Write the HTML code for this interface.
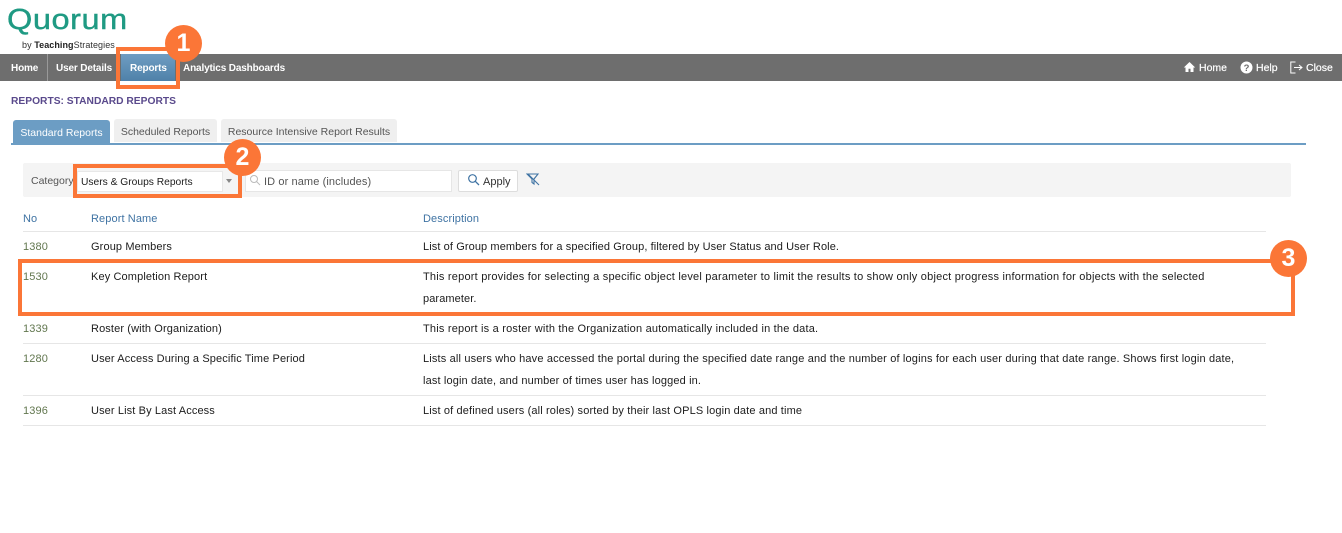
<!DOCTYPE html>
<html><head><meta charset="utf-8">
<style>
html,body{margin:0;padding:0;background:#fff;width:1342px;height:533px;overflow:hidden}
body{position:relative;font-family:"Liberation Sans",sans-serif;font-size:11px;color:#1c1c1c}
.t{position:absolute;white-space:nowrap;line-height:14px}
.b{position:absolute}
.nav{color:#fff;font-weight:bold;font-size:10px;top:62px;letter-spacing:-.15px}
.r{font-weight:normal;font-size:10.5px;letter-spacing:0;-webkit-text-stroke:.2px #fff;top:61px}
.h{color:#3f73a3;font-size:11px;top:212px;letter-spacing:.1px}
.no{color:#62774f;left:23px;font-size:11px;letter-spacing:.12px}
.nm{left:91px;letter-spacing:.12px}
.d{left:423px}
.line{position:absolute;left:23px;width:1243px;height:1px;background:#e6e6e6}
.box{position:absolute;border:4px solid #fb7637;box-sizing:border-box}
.circ{position:absolute;width:37px;height:37px;border-radius:50%;background:#fb7637;color:#fff;font-weight:bold;font-size:25px;line-height:37px;text-align:center}
.tab{position:absolute;top:119px;height:23px;background:#efefef;border-radius:3px 3px 0 0;color:#555;font-size:10.5px;line-height:27px;text-align:center}
</style></head><body>
<div class="t" style="left:7px;top:3px;font-size:29px;line-height:34px;color:#1f9a83;letter-spacing:.5px;transform:scaleX(1.12);transform-origin:0 0;-webkit-text-stroke:.4px #1f9a83">Quorum</div>
<div class="t" style="left:22px;top:39px;font-size:9px;line-height:12px;color:#333;letter-spacing:.07px">by <b style="color:#222">Teaching</b>Strategies</div>

<div class="b" style="left:0;top:54px;width:1342px;height:27px;background:#6e6e6e"></div>
<div class="b" style="left:47px;top:54px;width:1px;height:27px;background:#999"></div>
<div class="b" style="left:121px;top:54px;width:54px;height:27px;background:linear-gradient(#6f9dc2,#4f81a9)"></div>
<div class="t nav" style="left:11px">Home</div>
<div class="t nav" style="left:56px">User Details</div>
<div class="t nav" style="left:130px">Reports</div>
<div class="t nav" style="left:183px">Analytics Dashboards</div>
<svg class="b" style="left:1183px;top:61px" width="13" height="12" viewBox="0 0 13 12"><path d="M6.500 1L0.800 6.500h1.700V11h3V7.800h2V11h3V6.500h1.700z" fill="#fff"/></svg>
<div class="t nav r" style="left:1199px">Home</div>
<svg class="b" style="left:1240px;top:61px" width="13" height="13" viewBox="0 0 13 13"><circle cx="6.500" cy="6.500" r="6" fill="#fff"/><text x="6.500" y="10" font-family="Liberation Sans" font-weight="bold" font-size="9.500" text-anchor="middle" fill="#6e6e6e">?</text></svg>
<div class="t nav r" style="left:1256px">Help</div>
<svg class="b" style="left:1290px;top:61px" width="14" height="13" viewBox="0 0 14 13"><path d="M5.500 1H.800V12H5.500M4 6.500H11.500M9 4L12 6.500L9 9" fill="none" stroke="#fff" stroke-width="1"/></svg>
<div class="t nav r" style="left:1306px">Close</div>

<div class="t" style="left:11px;top:95px;color:#5a4a8c;font-weight:bold;font-size:10.25px">REPORTS: STANDARD REPORTS</div>

<div class="tab" style="left:13px;top:120px;width:97px;height:23px;background:#6c9dc4;color:#fff">Standard Reports</div>
<div class="tab" style="left:114px;width:103px">Scheduled Reports</div>
<div class="tab" style="left:221px;width:176px">Resource Intensive Report Results</div>
<div class="b" style="left:11px;top:143px;width:1295px;height:2px;background:#6c9dc4"></div>

<div class="b" style="left:23px;top:163px;width:1268px;height:34px;background:#f4f4f4;border-radius:2px"></div>
<div class="t" style="left:31px;top:174px;color:#555;font-size:10.5px">Category</div>
<div class="b" style="left:77px;top:171px;width:144px;height:19px;background:#fff;border:1px solid #e8e8e8"></div>
<div class="t" style="left:81px;top:176px;font-size:10.25px">Users &amp; Groups Reports</div>
<div class="b" style="left:225.500px;top:179px;width:0;height:0;border-left:3.500px solid transparent;border-right:3.500px solid transparent;border-top:4px solid #888"></div>
<div class="b" style="left:245px;top:170px;width:205px;height:20px;background:#fff;border:1px solid #e6e6e6"></div>
<svg class="b" style="left:249px;top:174px" width="12" height="12" viewBox="0 0 12 12"><circle cx="5" cy="5" r="3.500" fill="none" stroke="#bbb"/><path d="M7.500 7.500L11 11" stroke="#bbb"/></svg>
<div class="t" style="left:264px;top:175px;color:#555;font-size:11px;letter-spacing:.1px">ID or name (includes)</div>
<div class="b" style="left:458px;top:170px;width:58px;height:20px;background:#fff;border:1px solid #ddd;border-radius:2px"></div>
<svg class="b" style="left:467px;top:173px" width="13" height="13" viewBox="0 0 13 13"><circle cx="5.500" cy="5.500" r="3.800" fill="none" stroke="#3f73a3" stroke-width="1.200"/><path d="M8.300 8.300L12 12" stroke="#3f73a3" stroke-width="1.300"/></svg>
<div class="t" style="left:483px;top:175px;font-size:11px;color:#333">Apply</div>
<svg class="b" style="left:526px;top:173px" width="14" height="13" viewBox="0 0 14 13"><path d="M1 1H12L8 6V11L6 9.500V6ZM2 1L13 12" fill="none" stroke="#3f73a3" stroke-width="1.100"/></svg>

<div class="t h" style="left:23px">No</div>
<div class="t h" style="left:91px">Report Name</div>
<div class="t h" style="left:423px">Description</div>
<div class="line" style="top:231px"></div>

<div class="t no" style="top:240px">1380</div>
<div class="t nm" style="top:240px">Group Members</div>
<div class="t d" style="top:240px;letter-spacing:.1px">List of Group members for a specified Group, filtered by User Status and User Role.</div>

<div class="t no" style="top:270px">1530</div>
<div class="t nm" style="top:270px">Key Completion Report</div>
<div class="t d" style="top:270px;letter-spacing:.215px">This report provides for selecting a specific object level parameter to limit the results to show only object progress information for objects with the selected</div>
<div class="t d" style="top:292px;letter-spacing:.1px">parameter.</div>

<div class="t no" style="top:322px">1339</div>
<div class="t nm" style="top:322px">Roster (with Organization)</div>
<div class="t d" style="top:322px;letter-spacing:.2px">This report is a roster with the Organization automatically included in the data.</div>
<div class="line" style="top:343px"></div>

<div class="t no" style="top:352px">1280</div>
<div class="t nm" style="top:352px">User Access During a Specific Time Period</div>
<div class="t d" style="top:352px;letter-spacing:.16px">Lists all users who have accessed the portal during the specified date range and the number of logins for each user during that date range. Shows first login date,</div>
<div class="t d" style="top:374px;letter-spacing:.14px">last login date, and number of times user has logged in.</div>
<div class="line" style="top:395px"></div>

<div class="t no" style="top:404px">1396</div>
<div class="t nm" style="top:404px">User List By Last Access</div>
<div class="t d" style="top:404px;letter-spacing:.14px">List of defined users (all roles) sorted by their last OPLS login date and time</div>
<div class="line" style="top:425px"></div>

<div class="box" style="left:116px;top:47px;width:64px;height:42px"></div>
<div class="box" style="left:73px;top:164px;width:169px;height:34px"></div>
<div class="box" style="left:18px;top:259px;width:1277px;height:57px"></div>
<div class="circ" style="left:165px;top:25px;width:37px;height:37px">1</div>
<div class="circ" style="left:224px;top:139px">2</div>
<div class="circ" style="left:1270px;top:240px">3</div>
</body></html>
